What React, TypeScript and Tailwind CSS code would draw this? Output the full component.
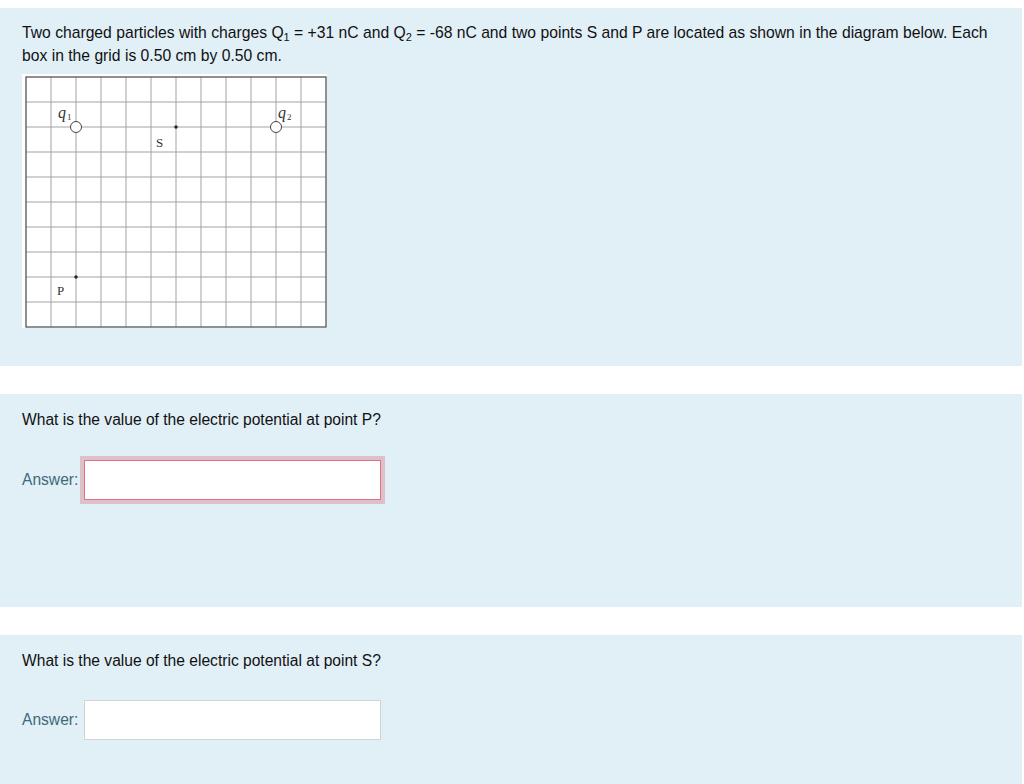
import React from 'react';

const COLS = 12;
const ROWS = 10;
const CELL = 25;

function GridDiagram() {
  const ox = 4;
  const oy = 3;
  const w = COLS * CELL;
  const h = ROWS * CELL;
  const lines: React.ReactNode[] = [];
  for (let i = 1; i < COLS; i++) {
    lines.push(<line key={`v${i}`} x1={ox + i * CELL} y1={oy} x2={ox + i * CELL} y2={oy + h} stroke="#a3a3a3" strokeWidth={1} />);
  }
  for (let j = 1; j < ROWS; j++) {
    lines.push(<line key={`h${j}`} x1={ox} y1={oy + j * CELL} x2={ox + w} y2={oy + j * CELL} stroke="#a3a3a3" strokeWidth={1} />);
  }
  const gx = (c: number) => ox + c * CELL;
  const gy = (r: number) => oy + r * CELL;

  return (
    <svg width={305} height={254} viewBox="0 0 305 254" className="block bg-white">
      <rect x={0} y={0} width={305} height={254} fill="#ffffff" />
      {lines}
      <rect x={ox} y={oy} width={w} height={h} fill="none" stroke="#555" strokeWidth={1.3} />
      {/* charges */}
      <circle cx={gx(2)} cy={gy(2)} r={5.5} fill="#fff" stroke="#444" strokeWidth={1} />
      <circle cx={gx(10)} cy={gy(2)} r={5.5} fill="#fff" stroke="#444" strokeWidth={1} />
      {/* points */}
      <circle cx={gx(6)} cy={gy(2)} r={1.7} fill="#222" />
      <circle cx={gx(2)} cy={gy(8)} r={1.7} fill="#222" />
      <text x={36} y={44} fontFamily="'Liberation Serif', serif" fontStyle="italic" fontSize={16} fill="#333">q</text>
      <text x={45} y={46} fontFamily="'Liberation Serif', serif" fontSize={9} fill="#333">1</text>
      <text x={256} y={44} fontFamily="'Liberation Serif', serif" fontStyle="italic" fontSize={16} fill="#333">q</text>
      <text x={265} y={46} fontFamily="'Liberation Serif', serif" fontSize={9} fill="#333">2</text>
      <text x={134} y={73} fontFamily="'Liberation Serif', serif" fontSize={13} fill="#333">S</text>
      <text x={35} y={221} fontFamily="'Liberation Serif', serif" fontSize={13} fill="#333">P</text>
    </svg>
  );
}

function AnswerRow({ focused }: { focused?: boolean }) {
  return (
    <div className="flex items-center">
      <span className="text-[15.6px] text-[#3e6a7a] mr-[6px]">Answer:</span>
      {focused ? (
        <div className="bg-[#dcc2c8] p-[4px] -m-[4px]">
          <div className="w-[297px] h-[40px] bg-white border border-[#e76f82]" />
        </div>
      ) : (
        <div className="w-[297px] h-[40px] bg-white border border-[#cfd4d8]" />
      )}
    </div>
  );
}

export default function App() {
  return (
    <div
      className="w-[1024px] h-[784px] bg-white overflow-hidden pt-[8px] text-[#111]"
      style={{ fontFamily: "'Liberation Sans', Arial, sans-serif" }}
    >
      <section className="w-[1022px] h-[358px] bg-[#e1eff7] px-[22px] pt-[13px]">
        <p className="text-[15.7px] leading-[23px] pr-[6px]">
          Two charged particles with charges Q<sub className="text-[11px] leading-none">1</sub> = +31 nC and Q
          <sub className="text-[11px] leading-none">2</sub> = -68 nC and two points S and P are located as shown in the
          diagram below. Each box in the grid is 0.50 cm by 0.50 cm.
        </p>
        <div className="mt-[7px]">
          <GridDiagram />
        </div>
      </section>

      <section className="w-[1022px] h-[213px] bg-[#e1eff7] mt-[28px] px-[22px] pt-[14px]">
        <p className="text-[15.6px] leading-[23px]">What is the value of the electric potential at point P?</p>
        <div className="mt-[29px]">
          <AnswerRow focused />
        </div>
      </section>

      <section className="w-[1022px] h-[160px] bg-[#e1eff7] mt-[28px] px-[22px] pt-[14px]">
        <p className="text-[15.6px] leading-[23px]">What is the value of the electric potential at point S?</p>
        <div className="mt-[28px]">
          <AnswerRow />
        </div>
      </section>
    </div>
  );
}
